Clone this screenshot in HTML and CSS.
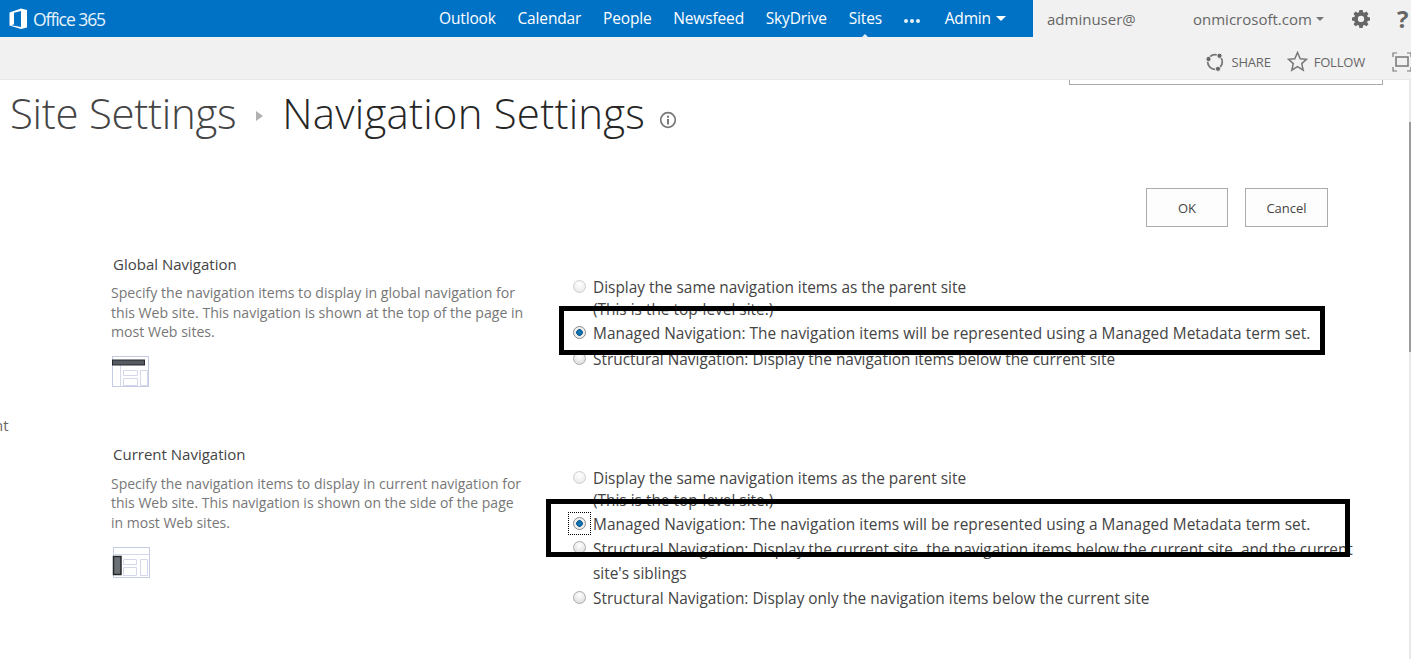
FILE: index.html
```html
<!DOCTYPE html>
<html lang="en">
<head>
<meta charset="utf-8">
<title>Navigation Settings</title>
<link rel="stylesheet" href="styles.css">
</head>
<body>
<header class="suite">
  <div class="suite-blue">
    <a class="brand">
      <svg class="brand-logo" width="20" height="22" viewBox="0 0 20 22"><path fill="#fff" d="M0.500 4.500 12 0.600 18 2v17.400L12 21 0.500 17.400ZM12 3 5 4.700v11.600l-2.500 1 9.500 1.600Z" fill-rule="evenodd"/></svg>
      <span class="brand-name">Office 365</span>
    </a>
    <nav class="suite-nav">
      <a class="nav-item">Outlook</a>
      <a class="nav-item">Calendar</a>
      <a class="nav-item">People</a>
      <a class="nav-item">Newsfeed</a>
      <a class="nav-item">SkyDrive</a>
      <a class="nav-item nav-current">Sites</a>
      <a class="nav-item nav-dots"><i></i><i></i><i></i></a>
      <a class="nav-item nav-admin">Admin<b class="caret-white"></b></a>
    </nav>
  </div>
  <div class="suite-user">
    <span class="user-a">adminuser@</span>
    <span class="user-b">onmicrosoft.com<b class="caret-grey"></b></span>
    <svg class="gear" width="20" height="20" viewBox="0 0 20 20"><path fill="#666" fill-rule="evenodd" d="M8.200 1h3.600l.5 2.600 1.500.7 2.200-1.500 2.300 2.500-1.500 2.100.6 1.500 2.600.5v3.400l-2.600.5-.6 1.500 1.500 2.100-2.400 2.400-2.100-1.500-1.500.6-.5 2.600H8.200l-.5-2.600-1.500-.6-2.100 1.500-2.400-2.400 1.500-2.100-.6-1.500L0 12.800V9.400l2.600-.5.6-1.500-1.500-2.100 2.300-2.500 2.200 1.500 1.500-.7ZM10 7.500a3.500 3.500 0 1 0 0 7 3.500 3.500 0 0 0 0-7Z" transform="translate(1 0) scale(.9)"/></svg>
    <span class="help">?</span>
  </div>
</header>
<div class="ribbon">
  <a class="action action-share">
    <svg width="20" height="20" viewBox="0 0 20 20"><circle cx="10" cy="10" r="7.300" fill="none" stroke="#777" stroke-width="1.800"/><circle cx="3.500" cy="7" r="2.600" fill="#666" stroke="#f1f1f1"/><circle cx="14.500" cy="3.800" r="2.600" fill="#666" stroke="#f1f1f1"/><circle cx="13" cy="16.800" r="2.600" fill="#666" stroke="#f1f1f1"/></svg>
    <span>SHARE</span>
  </a>
  <a class="action">
    <svg width="21" height="21" viewBox="0 0 21 21"><path fill="none" stroke="#777" stroke-width="1.500" d="M10.500 1.500l2.700 6.200 6.300.6-4.800 4.300 1.500 6.600-5.700-3.500-5.700 3.500 1.500-6.600L1.500 8.300l6.300-.6Z"/></svg>
    <span>FOLLOW</span>
  </a>
  <svg class="focus" width="20" height="20" viewBox="0 0 20 20"><path fill="none" stroke="#777" stroke-width="1.200" d="M1 5V1h4M15 1h4v4M1 15v4h4M15 19h4v-4"/><rect x="4" y="5" width="12" height="9" fill="none" stroke="#777" stroke-width="1.500"/></svg>
</div>
<main class="page">
  <div class="scroll-track"><div class="scroll-thumb"></div></div>
  <div class="search-stub"></div>
  <h1 class="title">
    <span class="crumb">Site Settings</span>
    <span class="crumb-sep"></span>
    <span class="crumb-now">Navigation Settings</span>
    <svg class="info" width="18" height="18" viewBox="0 0 18 18"><circle cx="9" cy="9" r="7.300" fill="none" stroke="#777" stroke-width="1.700"/><rect x="8" y="8" width="2" height="5.500" fill="#777"/><rect x="8" y="4.700" width="2" height="2" fill="#777"/></svg>
  </h1>
  <div class="buttons">
    <button class="btn btn-ok">OK</button>
    <button class="btn btn-cancel">Cancel</button>
  </div>

  <section class="setting setting-global">
    <div class="setting-side">
      <h2 class="setting-title">Global Navigation</h2>
      <p class="setting-desc">Specify the navigation items to display in global navigation for this Web site. This navigation is shown at the top of the page in most Web sites.</p>
      <svg class="thumb" width="38" height="32" viewBox="0 0 38 32">
        <rect x=".5" y=".5" width="36" height="30" fill="#fff" stroke="#c5cbe3"/>
        <path fill="none" stroke="#d3d8ea" d="M8.500 8v22.500M11.500 14.500h14v5h-14ZM11.500 22.500h14v7h-14ZM28.500 14.500h7v15h-7Z"/>
        <rect x=".5" y="4" width="32" height="5" fill="#555b60" stroke="#26282b"/>
      </svg>
    </div>
    <div class="options">
      <label class="opt opt-a"><input type="radio" name="g" class="radio" disabled><span>Display the same navigation items as the parent site<br>(This is the top-level site.)</span></label>
      <label class="opt opt-b"><input type="radio" name="g" class="radio" checked><span>Managed Navigation: The navigation items will be represented using a Managed Metadata term set.</span></label>
      <label class="opt opt-c"><input type="radio" name="g" class="radio"><span>Structural Navigation: Display the navigation items below the current site</span></label>
      <div class="mark mark-g"></div>
    </div>
  </section>

  <div class="cutoff">nt</div>

  <section class="setting setting-current">
    <div class="setting-side">
      <h2 class="setting-title">Current Navigation</h2>
      <p class="setting-desc">Specify the navigation items to display in current navigation for this Web site. This navigation is shown on the side of the page in most Web sites.</p>
      <svg class="thumb" width="38" height="32" viewBox="0 0 38 32">
        <rect x="1.500" y=".5" width="36" height="30" fill="#fff" stroke="#c5cbe3"/>
        <path fill="none" stroke="#d3d8ea" d="M1.500 7.500h36M11.500 12.500h13v5h-13ZM11.500 20.500h13v8h-13ZM28.500 12.500h7v16h-7Z"/>
        <rect x="1.500" y="9.500" width="7.500" height="18" fill="#6a7074" stroke="#26282b" stroke-width="1.500"/>
      </svg>
    </div>
    <div class="options">
      <label class="opt opt-a"><input type="radio" name="c" class="radio" disabled><span>Display the same navigation items as the parent site<br>(This is the top-level site.)</span></label>
      <label class="opt opt-b"><b class="focus-ring"><input type="radio" name="c" class="radio" checked></b><span>Managed Navigation: The navigation items will be represented using a Managed Metadata term set.</span></label>
      <label class="opt opt-c"><input type="radio" name="c" class="radio"><span>Structural Navigation: Display the current site, the navigation items below the current site, and the current site's siblings</span></label>
      <label class="opt opt-d"><input type="radio" name="c" class="radio"><span>Structural Navigation: Display only the navigation items below the current site</span></label>
      <div class="mark mark-c"></div>
    </div>
  </section>
</main>
</body>
</html>
```
FILE: styles.css
```css
* { box-sizing: border-box; }
html, body { margin: 0; height: 659px; overflow: hidden; background: #fff; }
body { font-family: "Open Sans", "Noto Sans", sans-serif; color: #444; }

.suite { display: flex; height: 37px; }
.suite-blue { width: 1033px; background: #0072c6; display: flex; color: #fff; }
.brand { display: flex; align-items: center; width: 439px; padding-left: 9px; gap: 4px; }
.brand-name { font-size: 17.500px; letter-spacing: -1.050px; color: #e8f2fa; }
.suite-nav { display: flex; align-items: center; height: 37px; padding-bottom: 1px; }
.nav-item { font-size: 15.500px; letter-spacing: -0.150px; margin-right: 21.750px; display: block; position: relative; }
.nav-current::after { content: ""; position: absolute; left: 50%; margin-left: -4px; bottom: -9px; border: 4px solid transparent; border-top: 0; border-bottom-color: #e4eef7; }
.nav-dots { display: flex; gap: 2px; margin-right: 25px; padding-top: 5px; }
.nav-dots i { width: 4px; height: 4px; border-radius: 50%; background: #e6f0f8; }
.nav-admin { display: flex; align-items: center; margin-right: 0; }
.caret-white { margin-left: 5px; border: 5.500px solid transparent; border-top-color: #fff; border-bottom: 0; }

.suite-user { flex: 1; background: #f1f1f1; display: flex; align-items: center; padding-left: 14px; color: #666; font-size: 15px; overflow: hidden; }
.user-a { flex: none; width: 146px; }
.user-b { flex: none; display: flex; align-items: center; width: 158px; }
.caret-grey { margin-left: 4px; border: 4.500px solid transparent; border-top-color: #777; border-bottom: 0; }
.gear { flex: none; }
.help { flex: none; font-size: 24px; font-weight: 700; color: #666; margin-left: 26px; line-height: 1; }

.ribbon { height: 43px; background: #f1f1f1; border-bottom: 1px solid #e8e8e8; display: flex; align-items: center; justify-content: flex-end; font-size: 13px; color: #666; overflow: hidden; padding-top: 7px; }
.action { display: flex; align-items: center; gap: 6px; margin-right: 16px; letter-spacing: -0.200px; }
.action-share { gap: 7px; }
.focus { flex: none; margin-right: -1px; margin-left: 11px; }

.page { position: relative; height: 579px; }
.scroll-track { position: absolute; top: 0; right: 0; bottom: 0; width: 2px; background: #e8e8e8; }
.scroll-thumb { margin-top: 42px; height: 230px; background: #9c9c9c; }
.search-stub { margin-left: 1069px; width: 314px; height: 5px; border: 1px solid #ababab; border-top: 0; }
.title { margin: 1px 0 0 10px; height: 60px; padding-bottom: 7px; display: flex; align-items: center; font-weight: 300; font-size: 42px; color: #262626; }
.crumb { color: #444; letter-spacing: -0.300px; }
.crumb-sep { margin: 7px 19px 0 20px; border: 5px solid transparent; border-left: 7px solid #b1b1b1; border-right: 0; }
.crumb-now { letter-spacing: 0.200px; }
.info { margin: 15px 0 0 14px; }
.buttons { display: flex; gap: 17px; margin: 42px 0 0 1146px; }
.btn { height: 39px; background: #fdfdfd; border: 1px solid #ababab; font: 13px "Open Sans", sans-serif; color: #444; padding: 0; }
.btn-ok { width: 82px; }
.btn-cancel { width: 83px; }

.setting { display: flex; }
.setting-global { margin-top: 27px; height: 135px; }
.setting-current { height: 180px; }
.setting-side { width: 571px; padding-left: 111px; }
.setting-title { margin: 0 0 0 2px; font-size: 15px; font-weight: 400; color: #444; line-height: 20px; }
.setting-desc { margin: 9px 0 0; width: 415px; font-size: 14.100px; line-height: 19.500px; color: #777; }
.setting-current .setting-desc { margin-top: 9.500px; font-size: 14px; }
.thumb { display: block; margin: 14px 0 0 1px; }
.setting-current .thumb { margin-top: 14.500px; }
.cutoff { height: 55px; font-size: 15px; color: #666; margin-left: -6px; padding-top: 26px; line-height: 20px; }

.options { position: relative; font-size: 15.400px; color: #444; }
.setting-global .options { padding-top: 23px; }
.setting-current .options { padding-top: 24px; }
.opt { display: flex; width: 785px; }
.opt span { line-height: 22px; }
.opt-b { margin-top: 2px; letter-spacing: 0.050px; }
.opt-c { margin-top: 4px; }
.opt-d { margin-top: 1px; }
.setting-current .opt-c { margin-top: 1.500px; }
.setting-current .opt-c span { line-height: 24.500px; }
.radio { appearance: none; -webkit-appearance: none; flex: none; width: 13px; height: 13px; margin: 3px 7px 0 2px; border-radius: 50%; border: 1px solid #aaa; background: radial-gradient(circle at 50% 30%, #fff, #d7d7d7); }
.radio:checked { border-color: #8a8a8a; background: radial-gradient(circle closest-side, #1384c4 0, #0a5c90 55%, #e8e8e8 65%, #f4f4f4 100%); }
.radio:disabled { border-color: #d0d0d0; background: radial-gradient(circle at 50% 30%, #fff, #e6e6e6); }
.focus-ring { flex: none; display: block; width: 13px; height: 13px; margin: 3px 7px 0 2px; outline: 1px dotted #000; outline-offset: 4px; }
.focus-ring .radio { display: block; margin: 0; }
.mark { position: absolute; border: 5px solid #000; pointer-events: none; }
.mark-g { left: -12px; top: 52px; width: 766px; height: 49px; }
.mark-c { left: -25px; top: 55px; width: 804px; height: 58px; }
```
